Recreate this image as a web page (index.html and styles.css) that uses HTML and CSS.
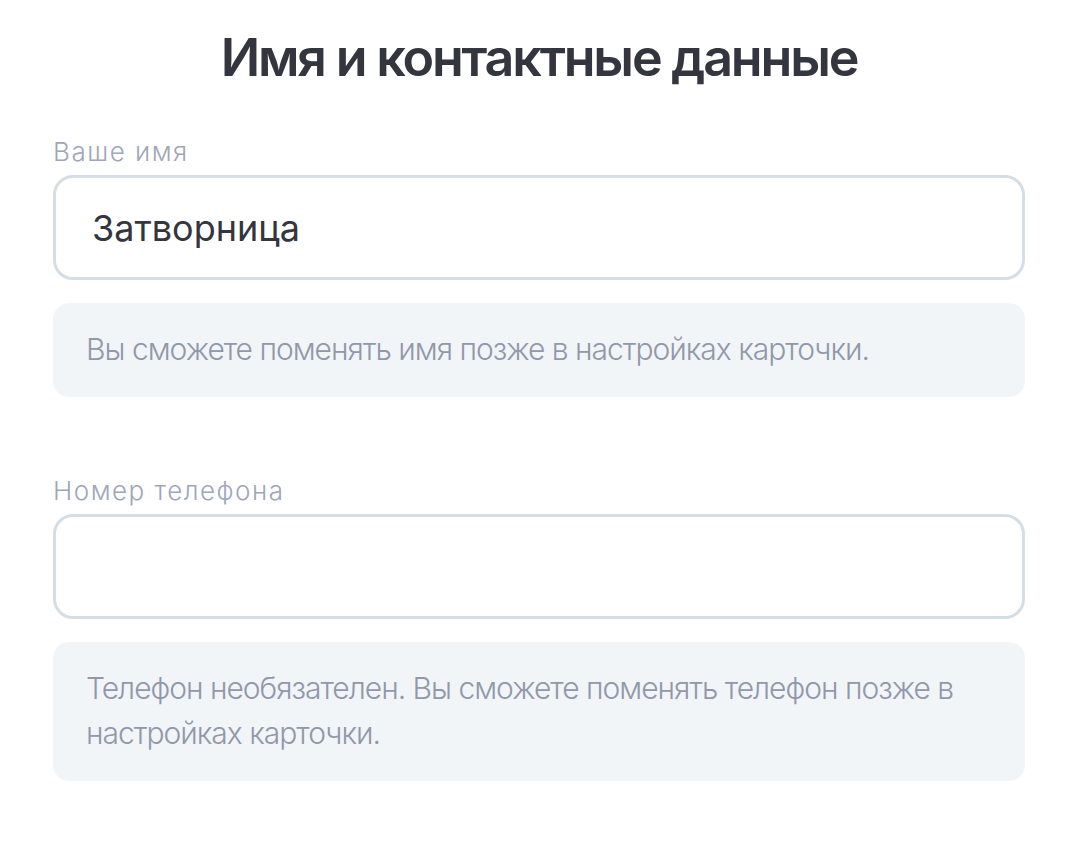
FILE: index.html
```html
<!DOCTYPE html>
<html lang="ru">
<head>
<meta charset="utf-8">
<title>Имя и контактные данные</title>
<link rel="stylesheet" href="styles.css">
</head>
<body>
<main class="form">
  <h1 class="title">Имя и контактные данные</h1>
  <section class="field">
    <label class="label" for="name">Ваше имя</label>
    <input class="input" id="name" type="text" value="Затворница">
    <p class="hint">Вы сможете поменять имя позже в настройках карточки.</p>
  </section>
  <section class="field field-phone">
    <label class="label" for="phone">Номер телефона</label>
    <input class="input" id="phone" type="tel" value="">
    <p class="hint">Телефон необязателен. Вы сможете поменять телефон позже в настройках карточки.</p>
  </section>
</main>
</body>
</html>
```

FILE: styles.css
```css
html, body {
  margin: 0;
  padding: 0;
  background: #ffffff;
}
body {
  font-family: Inter, "Noto Sans", sans-serif;
  color: #33353f;
}
.form {
  width: 972px;
  margin: 0 auto;
  padding-top: 26px;
  display: flex;
  flex-direction: column;
}
.title {
  margin: 0 0 47px;
  text-align: center;
  font-size: 52px;
  line-height: 64px;
  font-weight: 600;
  letter-spacing: -2.2px;
  color: #33353f;
}
.field {
  display: flex;
  flex-direction: column;
}
.field-phone {
  margin-top: 79px;
}
.label {
  font-size: 26px;
  line-height: 30px;
  font-weight: 300;
  letter-spacing: 1.5px;
  color: #9ea6b8;
  margin-bottom: 8px;
}
.input {
  box-sizing: border-box;
  height: 105px;
  width: 100%;
  border: 3px solid #d5dde5;
  border-radius: 20px;
  padding: 0 36px;
  font-family: inherit;
  font-size: 36px;
  font-weight: 400;
  color: #33353f;
  background: #fff;
  outline: none;
}
.hint {
  margin: 23px 0 0;
  padding: 24px 33px 25px;
  background: #f2f5f8;
  border-radius: 16px;
  font-size: 30px;
  line-height: 45px;
  font-weight: 300;
  letter-spacing: -1px;
  color: #9098aa;
}
```
